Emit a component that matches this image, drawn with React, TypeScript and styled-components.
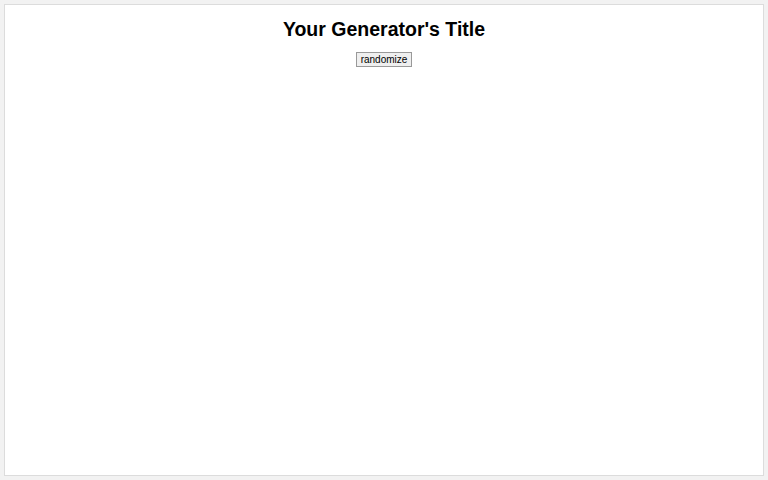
import React from "react";
import styled, { createGlobalStyle } from "styled-components";

const Global = createGlobalStyle`
  html, body { margin: 0; padding: 0; background: #f2f2f2; }
  body { font-family: "Liberation Sans", Arial, sans-serif; }
  * { box-sizing: border-box; }
`;

const Page = styled.div`
  padding: 4px;
  height: 480px;
`;

const Panel = styled.main`
  background: #ffffff;
  border: 1px solid #dcdcdc;
  height: 472px;
  display: flex;
  flex-direction: column;
  align-items: center;
  padding-top: 13px;
`;

const Title = styled.h1`
  margin: 0;
  font-size: 19.5px;
  font-weight: bold;
  color: #000;
  line-height: 23px;
`;

const Button = styled.button`
  margin-top: 11px;
  font-family: "Liberation Sans", Arial, sans-serif;
  font-size: 10px;
  line-height: 11px;
  padding: 1px 4px;
  background: #efefef;
  border: 1px solid #999999;
  border-radius: 0;
  color: #000;
`;

export default function App() {
  return (
    <>
      <Global />
      <Page>
        <Panel>
          <Title>Your Generator's Title</Title>
          <Button>randomize</Button>
        </Panel>
      </Page>
    </>
  );
}
